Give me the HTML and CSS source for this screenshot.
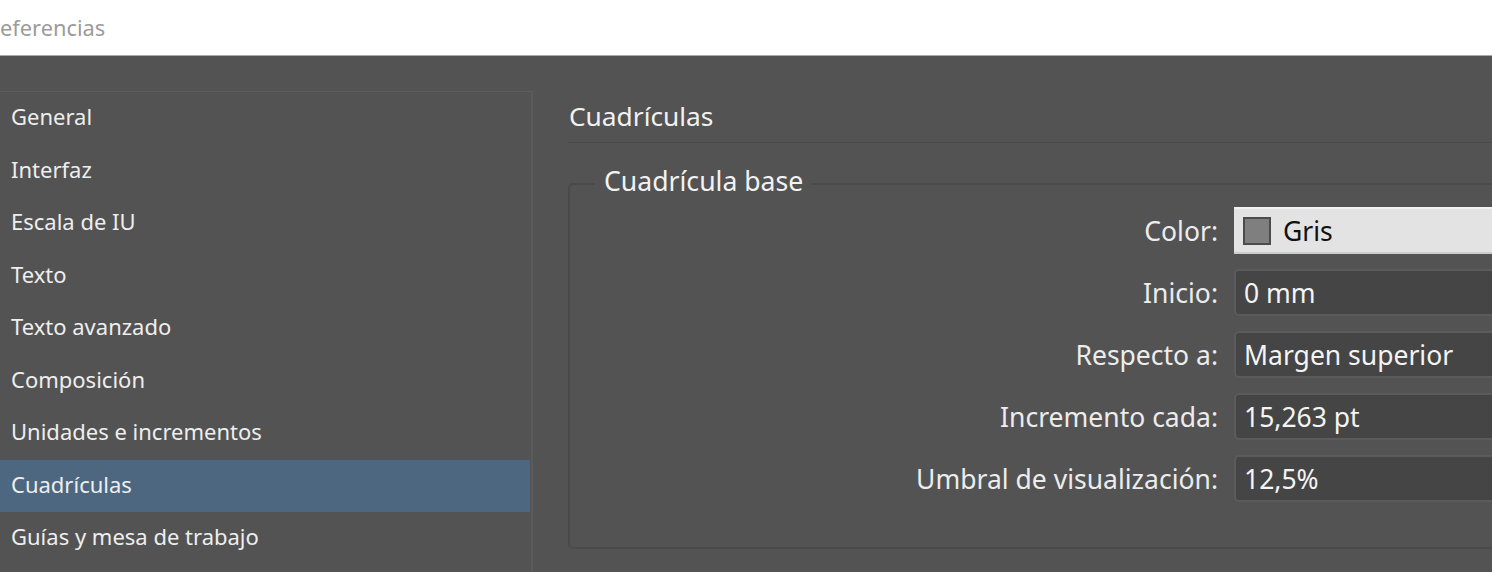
FILE: index.html
```html
<!DOCTYPE html>
<html lang="es">
<head>
<meta charset="utf-8">
<title>Preferencias</title>
<link rel="stylesheet" href="styles.css">
</head>
<body>
<header class="titlebar"><span class="title">eferencias</span></header>
<main class="dialog">
  <nav class="sidebar">
    <ul class="menu">
      <li class="item">General</li>
      <li class="item">Interfaz</li>
      <li class="item">Escala de IU</li>
      <li class="item">Texto</li>
      <li class="item">Texto avanzado</li>
      <li class="item">Composición</li>
      <li class="item">Unidades e incrementos</li>
      <li class="item selected">Cuadrículas</li>
      <li class="item">Guías y mesa de trabajo</li>
    </ul>
  </nav>
  <section class="content">
    <h1 class="heading">Cuadrículas</h1>
    <fieldset class="group">
      <legend class="legend">Cuadrícula base</legend>
      <div class="form">
        <label class="label">Color:</label>
        <div class="field light"><span class="swatch"></span><span class="value">Gris</span></div>
        <label class="label">Inicio:</label>
        <div class="field"><span class="value">0 mm</span></div>
        <label class="label">Respecto a:</label>
        <div class="field"><span class="value">Margen superior</span></div>
        <label class="label">Incremento cada:</label>
        <div class="field"><span class="value">15,263 pt</span></div>
        <label class="label">Umbral de visualización:</label>
        <div class="field"><span class="value">12,5%</span></div>
      </div>
    </fieldset>
  </section>
</main>
</body>
</html>
```

FILE: styles.css
```css
html, body {
  margin: 0;
  padding: 0;
  height: 100%;
  overflow: hidden;
}
body {
  background: #535353;
  font-family: "Noto Sans", "DejaVu Sans", sans-serif;
  color: #ececec;
}
.titlebar {
  height: 55px;
  background: #ffffff;
  border-bottom: 1px solid #a9a9a9;
  display: flex;
  align-items: center;
}
.title {
  font-size: 21.8px;
  color: #9b9b9b;
  margin-top: -1px;
}
.dialog {
  display: flex;
  align-items: flex-start;
  width: 1700px;
}
.sidebar {
  margin-top: 35px;
  width: 533px;
  flex: none;
  height: 540px;
  border-top: 1px solid #5d5d5d;
  border-right: 2px solid #5a5a5a;
  box-sizing: border-box;
}
.menu {
  list-style: none;
  margin: 0;
  padding: 0;
}
.item {
  height: 52.5px;
  line-height: 48px;
  padding-left: 11px;
  font-size: 22px;
  color: #eeeeee;
}
.item.selected {
  background: #4d6780;
  margin-right: 1px;
}
.content {
  margin-top: 36px;
  padding-left: 35px;
  flex: none;
  width: 1100px;
}
.heading {
  margin: 0;
  height: 50px;
  line-height: 48px;
  font-size: 26.3px;
  font-weight: normal;
  color: #f2f2f2;
  padding-left: 1px;
  border-bottom: 1px solid #4b4b4b;
}
.group {
  margin: 23px 0 0 0;
  padding: 0 0 45px 0;
  border: 2px solid #4a4a4a;
  border-radius: 5px;
}
.legend {
  margin-left: 25px;
  padding: 0 9px 6px 9px;
  font-size: 26.6px;
  line-height: 30px;
  color: #f2f2f2;
}
.form {
  display: grid;
  grid-template-columns: 648px 420px;
  column-gap: 16px;
  row-gap: 15px;
  margin-top: 5px;
  align-items: center;
}
.label {
  text-align: right;
  font-size: 26.5px;
  color: #ececec;
}
.field {
  height: 47px;
  box-sizing: border-box;
  background: #454545;
  border: 2px solid #5b5b5b;
  border-radius: 5px;
  display: flex;
  align-items: center;
  padding-left: 8px;
  font-size: 26.5px;
  color: #f4f4f4;
}
.field.light {
  background: #e3e3e3;
  border: none;
  border-top: 2px solid #f2f2f2;
  border-bottom: 2px solid #cccccc;
  border-radius: 0;
  color: #111111;
  padding-left: 9px;
}
.swatch {
  width: 28px;
  height: 28px;
  box-sizing: border-box;
  background: #7f7f7f;
  border: 2px solid #4b4b4b;
  margin-right: 12px;
}
```
